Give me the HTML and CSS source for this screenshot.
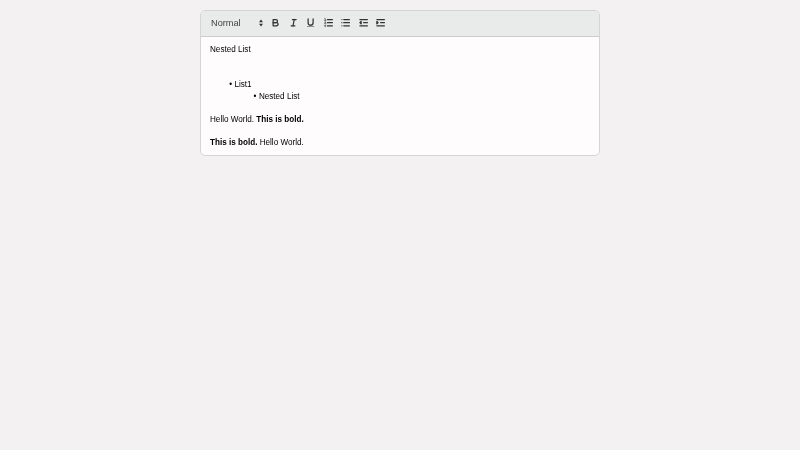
FILE: index.html
```html
<!DOCTYPE html>
<html>
<head>
    <title>Editor</title>
    <link rel="stylesheet" href="styles.css">
</head>
<body>
    <div class="editor-wrap">
        <div class="toolbar">
            <div class="picker">
                <span>Normal</span>
                <svg class="picker-arrows" viewBox="0 0 6 10"><polygon points="3 0.5 5.5 4 0.5 4"/><polygon points="0.5 6 5.5 6 3 9.5"/></svg>
            </div>
            <button class="tool"><svg viewBox="0 0 18 18"><path class="st" d="M5,4H9.5A2.5,2.5,0,0,1,12,6.5v0A2.5,2.5,0,0,1,9.5,9H5V4Z"/><path class="st" d="M5,9h5.5A2.5,2.5,0,0,1,13,11.5v0A2.5,2.5,0,0,1,10.5,14H5V9Z"/></svg></button>
            <button class="tool"><svg viewBox="0 0 18 18"><line class="st" x1="7" x2="13" y1="4" y2="4"/><line class="st" x1="5" x2="11" y1="14" y2="14"/><line class="st" x1="8" x2="10" y1="14" y2="4"/></svg></button>
            <button class="tool"><svg viewBox="0 0 18 18"><path class="st" d="M5,3V9a4.012,4.012,0,0,0,4,4H9a4.012,4.012,0,0,0,4-4V3"/><rect class="fl" height="1" rx="0.5" ry="0.5" width="12" x="3" y="15"/></svg></button>
            <button class="tool"><svg viewBox="0 0 18 18"><line class="st" x1="7" x2="15" y1="4" y2="4"/><line class="st" x1="7" x2="15" y1="9" y2="9"/><line class="st" x1="7" x2="15" y1="14" y2="14"/><line class="st thin" x1="2.5" x2="4.5" y1="5.5" y2="5.5"/><path class="fl" d="M3.5,6A0.5,0.5,0,0,1,3,5.5V3.085l-0.276.138A0.5,0.5,0,0,1,2.053,3c-0.124-.247-0.023-0.324.224-0.447l1-.5A0.5,0.5,0,0,1,4,2.5v3A0.5,0.5,0,0,1,3.5,6Z"/><path class="st thin" d="M4.5,10.5h-2c0-.234,1.85-1.076,1.85-2.234A0.959,0.959,0,0,0,2.5,8.156"/><path class="st thin" d="M2.5,14.846a0.959,0.959,0,0,0,1.85-.109A0.7,0.7,0,0,0,3.75,14a0.688,0.688,0,0,0,.6-0.736,0.959,0.959,0,0,0-1.85-.109"/></svg></button>
            <button class="tool"><svg viewBox="0 0 18 18"><line class="st" x1="6" x2="15" y1="4" y2="4"/><line class="st" x1="6" x2="15" y1="9" y2="9"/><line class="st" x1="6" x2="15" y1="14" y2="14"/><line class="st" x1="3" x2="3" y1="4" y2="4"/><line class="st" x1="3" x2="3" y1="9" y2="9"/><line class="st" x1="3" x2="3" y1="14" y2="14"/></svg></button>
            <button class="tool"><svg viewBox="0 0 18 18"><line class="st" x1="3" x2="15" y1="14" y2="14"/><line class="st" x1="3" x2="15" y1="4" y2="4"/><line class="st" x1="9" x2="15" y1="9" y2="9"/><polyline class="st fl" points="5 7 5 11 3 9 5 7"/></svg></button>
            <button class="tool"><svg viewBox="0 0 18 18"><line class="st" x1="3" x2="15" y1="14" y2="14"/><line class="st" x1="3" x2="15" y1="4" y2="4"/><line class="st" x1="9" x2="15" y1="9" y2="9"/><polyline class="st fl" points="3 7 3 11 5 9 3 7"/></svg></button>
        </div>
        <div class="content">
            <p>Nested List</p>
            <p><br></p>
            <p><br></p>
            <ul>
                <li class="indent-1">List1</li>
                <li class="indent-2">Nested List</li>
            </ul>
            <p><br></p>
            <p>Hello World. <strong>This is bold.</strong></p>
            <p><br></p>
            <p><strong>This is bold.</strong> Hello World.</p>
        </div>
    </div>
</body>
</html>
```

FILE: styles.css
```css
body {
    margin: 0;
    background: #f3f1f2;
    font-family: "Liberation Sans", Arial, sans-serif;
}

.editor-wrap {
    width: 400px;
    margin: 10px auto 0;
    box-sizing: border-box;
    background: #fffcfd;
    border: 1px solid #d4d4d4;
    border-radius: 5px;
    overflow: hidden;
    /* the reference is a soft, downscaled capture */
    filter: blur(0.25px);
}

.toolbar {
    display: flex;
    align-items: center;
    padding: 4.5px 5px 5.5px;
    background: #e9ebea;
    border-bottom: 1px solid #ccc;
}

.picker {
    display: flex;
    align-items: center;
    justify-content: space-between;
    width: 61.25px;
    height: 15px;
    box-sizing: border-box;
    padding: 0 3.5px 0 5px;
    font-size: 9.2px;
    color: #444;
}

.picker-arrows {
    width: 6px;
    height: 8px;
    fill: #333;
}

.tool {
    width: 17.5px;
    height: 15px;
    padding: 1.9px 3.1px;
    border: none;
    background: none;
}

.tool svg {
    display: block;
    width: 11.25px;
    height: 11.25px;
}

.st {
    fill: none;
    stroke: #333;
    stroke-width: 2;
    stroke-linecap: round;
    stroke-linejoin: round;
}

.thin {
    stroke-width: 1;
}

.fl {
    fill: #333;
}

.content {
    padding: 7.45px 9px 7.1px;
    font-size: 8.15px;
    line-height: 11.54px;
    color: #000;
}

.content p,
.content ul {
    margin: 0;
    padding: 0;
}

.content ul {
    list-style: none;
}

.content li::before {
    content: "\2022";
    display: inline-block;
    width: 1.2em;
    margin-left: -1.5em;
    margin-right: 0.3em;
    text-align: right;
}

.indent-1 {
    padding-left: 3em;
}

.indent-2 {
    padding-left: 6em;
}
```
